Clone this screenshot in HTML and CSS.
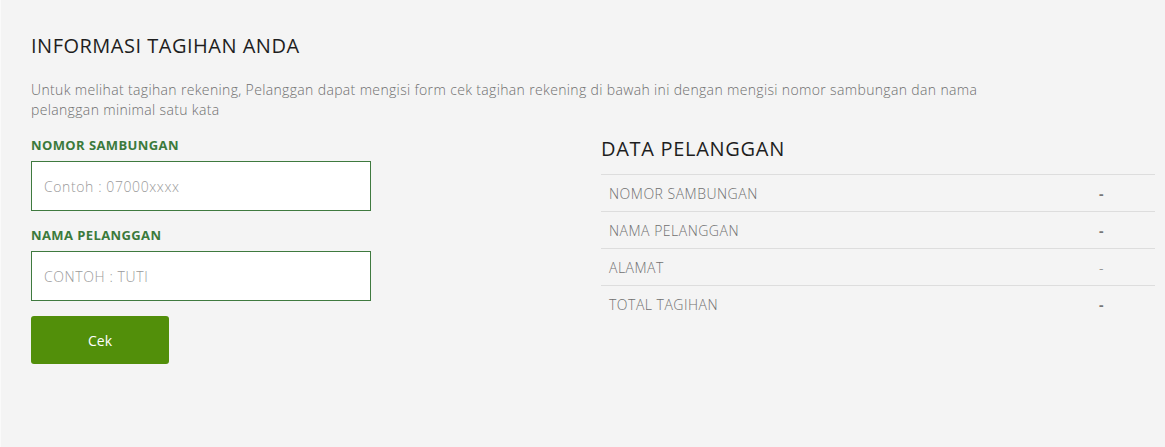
FILE: index.html
```html
<!DOCTYPE html>
<html>
<head>
<meta charset="utf-8">
<link rel="stylesheet" href="styles.css">
</head>
<body>
<div class="page">
  <h1 class="title">INFORMASI TAGIHAN ANDA</h1>
  <p class="intro">Untuk melihat tagihan rekening, Pelanggan dapat mengisi form cek tagihan rekening di bawah ini dengan mengisi nomor sambungan dan nama pelanggan minimal satu kata</p>
  <div class="cols">
    <form class="form">
      <label class="label">NOMOR SAMBUNGAN</label>
      <input class="input" type="text" placeholder="Contoh : 07000xxxx">
      <label class="label">NAMA PELANGGAN</label>
      <input class="input last" type="text" placeholder="CONTOH : TUTI">
      <button class="btn" type="button">Cek</button>
    </form>
    <div class="data">
      <h2 class="subtitle">DATA PELANGGAN</h2>
      <table class="table">
        <tr><td>NOMOR SAMBUNGAN</td><td class="val">-</td></tr>
        <tr><td>NAMA PELANGGAN</td><td class="val">-</td></tr>
        <tr><td>ALAMAT</td><td class="val thin">-</td></tr>
        <tr><td>TOTAL TAGIHAN</td><td class="val">-</td></tr>
      </table>
    </div>
  </div>
</div>
</body>
</html>
```
FILE: styles.css
```css
html, body {
  margin: 0;
  padding: 0;
  height: 100%;
}
body {
  background: #f4f4f4;
  font-family: "Open Sans", "Lato", sans-serif;
  border-left: 1px solid #fafafa;
  box-sizing: border-box;
}
.page {
  padding: 34px 10px 0 30px;
}
.title {
  margin: 0;
  font-size: 20px;
  font-weight: 400;
  color: #1e1e1e;
  line-height: 24px;
  letter-spacing: 0.5px;
}
.intro {
  margin: 22px 0 0;
  max-width: 1000px;
  font-size: 14px;
  line-height: 20px;
  font-weight: 300;
  color: #6f6f6f;
  letter-spacing: 0.35px;
}
.cols {
  display: grid;
  grid-template-columns: 540px 1fr;
  column-gap: 30px;
  margin-top: 16px;
}
.form {
  display: flex;
  flex-direction: column;
  align-items: flex-start;
  margin: 0;
}
.label {
  font-size: 13px;
  font-weight: 700;
  color: #3b7a3c;
  line-height: 18px;
  margin-bottom: 7px;
  letter-spacing: 0.4px;
}
.input {
  width: 340px;
  height: 50px;
  box-sizing: border-box;
  border: 1px solid #3f7a3f;
  background: #fff;
  padding: 0 12px;
  font-family: inherit;
  font-size: 14px;
  font-weight: 300;
  color: #555;
  margin: 0 0 15px;
  outline: none;
  letter-spacing: 0.6px;
}
.input::placeholder {
  color: #9a9a9a;
}
.input.last {
  margin-bottom: 15px;
}
.btn {
  width: 138px;
  height: 48px;
  border: none;
  border-radius: 3px;
  background: #528f0a;
  color: #fff;
  font-family: inherit;
  font-size: 14px;
}
.subtitle {
  margin: 1px 0 0;
  font-size: 20px;
  font-weight: 400;
  line-height: 24px;
  color: #1e1e1e;
  letter-spacing: 0.7px;
}
.table {
  width: 100%;
  border-collapse: collapse;
  margin-top: 13px;
}
.table td {
  border-top: 1px solid #ddd;
  height: 36px;
  padding: 0 8px;
  font-size: 14px;
  font-weight: 300;
  color: #707070;
  vertical-align: middle;
  letter-spacing: 0.5px;
}
.table .val {
  width: 48px;
  font-weight: 700;
  color: #777;
}
.table .val.thin {
  font-weight: 300;
}
```
